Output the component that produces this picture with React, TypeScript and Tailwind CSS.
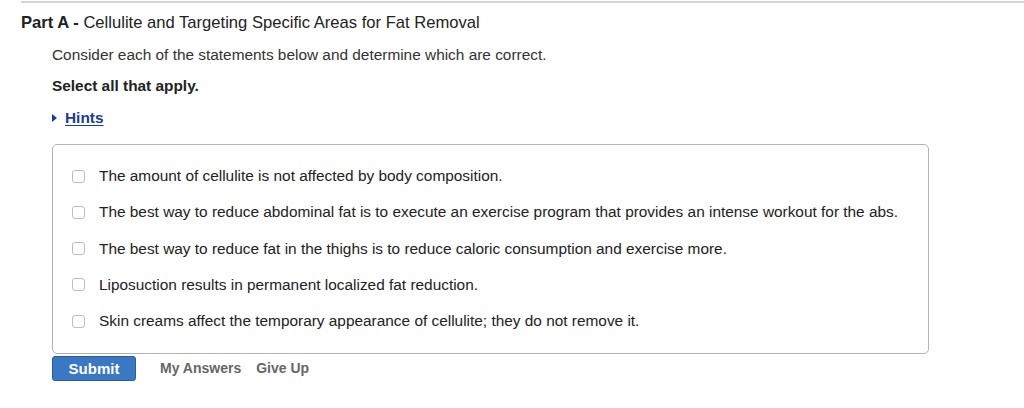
import React from "react"

const options = [
    "The amount of cellulite is not affected by body composition.",
    "The best way to reduce abdominal fat is to execute an exercise program that provides an intense workout for the abs.",
    "The best way to reduce fat in the thighs is to reduce caloric consumption and exercise more.",
    "Liposuction results in permanent localized fat reduction.",
    "Skin creams affect the temporary appearance of cellulite; they do not remove it.",
]

export default function App() {
    const [checked, setChecked] = React.useState<boolean[]>(options.map(() => false))

    return (
        <div className="w-[1024px] h-[408px] bg-white pl-[21px] pt-px font-['Liberation_Sans',Arial,sans-serif] text-[#333]">
            <div className="h-[2px] bg-[#d4d4d4]" />

            {/* Title */}
            <h2 className="mt-[11px] text-[16.6px] leading-[18px] text-[#222]">
                <span className="font-bold">Part A - </span>Cellulite and Targeting Specific Areas for Fat Removal
            </h2>

            <div className="ml-[31px]">
                <p className="mt-[13px] text-[15.4px] leading-5">Consider each of the statements below and determine which are correct.</p>
                <p className="mt-[11px] text-[15.4px] leading-5 font-bold text-[#222]">Select all that apply.</p>

                {/* Hints */}
                <div className="mt-[12px] flex items-center h-5">
                    <span className="w-0 h-0 border-y-[4px] border-y-transparent border-l-[5px] border-l-[#1a3b96] mr-[8px]" />
                    <a href="#" className="text-[15.4px] font-bold text-[#1a3b96] underline underline-offset-2">Hints</a>
                </div>

                {/* Options */}
                <div className="mt-[16px] w-[877px] border border-[#b4b4b4] rounded-[5px] pt-[13px] pb-[14px]">
                    {options.map((opt, i) => (
                        <label key={i} className="flex items-center h-[36.25px] pl-[19px] cursor-pointer">
                            <input
                                type="checkbox"
                                checked={checked[i]}
                                onChange={() => setChecked(c => c.map((v, j) => (j === i ? !v : v)))}
                                className="appearance-none w-[13px] h-[13px] border border-[#bdbdbd] rounded-[3px] bg-white shrink-0 checked:bg-[#3a78c3]"
                            />
                            <span className="ml-[14px] text-[15.4px] leading-5 text-[#222]">{opt}</span>
                        </label>
                    ))}
                </div>

                {/* Actions */}
                <div className="mt-[2px] flex items-center">
                    <button
                        type="button"
                        className="w-[84px] h-[25px] rounded-[3px] bg-[#3a78c3] border border-[#2b5d9c] text-white text-[15px] font-bold"
                    >
                        Submit
                    </button>
                    <span className="ml-[24px] text-[14px] font-bold text-[#666]">My Answers</span>
                    <span className="ml-[15px] text-[14px] font-bold text-[#666]">Give Up</span>
                </div>
            </div>
        </div>
    )
}
